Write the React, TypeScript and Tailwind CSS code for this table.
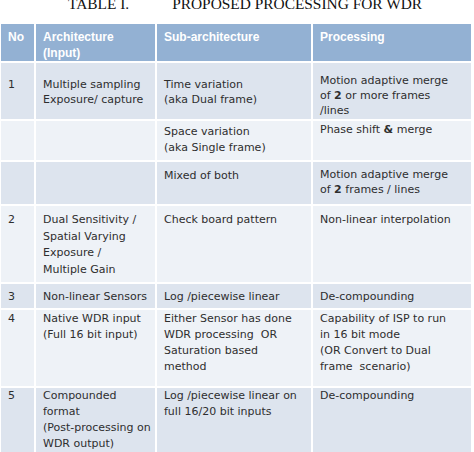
import React from "react";

const body = "font-['DejaVu_Sans',sans-serif] text-[11px] text-[#2e2e2e] whitespace-nowrap";
const dark = "bg-[#dde4ee]";
const light = "bg-[#eef2f7]";

function Cell({ bg, pt, lines, lh = "leading-[15px]" }: { bg: string; pt: string; lines?: React.ReactNode[]; lh?: string }) {
  return (
    <div className={`${bg} ${pt} pl-[7px] ${body} ${lh}`}>
      {(lines || []).map((l, i) => (
        <div key={i}>{l}</div>
      ))}
    </div>
  );
}

function Head({ lines }: { lines: string[] }) {
  return (
    <div className="bg-[#93b1d3] pt-[5px] pl-[7px] font-['Liberation_Sans',Arial,sans-serif] font-bold text-[12px] leading-[16px] text-white whitespace-nowrap">
      {lines.map((l, i) => (
        <div key={i}>{l}</div>
      ))}
    </div>
  );
}

export default function App() {
  return (
    <div className="w-[474px] h-[452px] overflow-hidden bg-white">
      <div className="h-[24px] overflow-hidden">
        <div className="-mt-[4px] pl-[68px] flex font-['Liberation_Serif','Times_New_Roman',serif] text-[15.4px] leading-[15px] text-[#111] whitespace-nowrap">
          <span>TABLE I.</span>
          <span className="ml-[43px]">PROPOSED PROCESSING FOR WDR</span>
        </div>
      </div>
      <div className="ml-[1px] w-[470px] grid grid-cols-[33px_119px_154px_158px] grid-rows-[37px_56px_39px_42px_76px_24px_76px_70px] gap-[2px] bg-white">
        <Head lines={["No"]} />
        <Head lines={["Architecture", "(Input)"]} />
        <Head lines={["Sub-architecture"]} />
        <Head lines={["Processing"]} />

        <Cell bg={dark} pt="pt-[14px]" lines={["1"]} />
        <Cell bg={dark} pt="pt-[14px]" lines={["Multiple sampling", "Exposure/ capture"]} />
        <Cell bg={dark} pt="pt-[14px]" lines={["Time variation", "(aka Dual frame)"]} />
        <Cell
          bg={dark}
          pt="pt-[10px]"
          lines={[
            "Motion adaptive merge",
            <>of <b>2</b> or more frames</>,
            "/lines",
          ]}
        />

        <Cell bg={light} pt="pt-[2px]" />
        <Cell bg={light} pt="pt-[2px]" />
        <Cell bg={light} pt="pt-[3px]" lh="leading-[16px]" lines={["Space variation", "(aka Single frame)"]} />
        <Cell bg={light} pt="pt-[1px]" lines={[<>Phase shift <b>&amp;</b> merge</>]} />

        <Cell bg={dark} pt="pt-[6px]" />
        <Cell bg={dark} pt="pt-[6px]" />
        <Cell bg={dark} pt="pt-[6px]" lines={["Mixed of both"]} />
        <Cell
          bg={dark}
          pt="pt-[5px]"
          lines={["Motion adaptive merge", <>of <b>2</b> frames / lines</>]}
        />

        <Cell bg={light} pt="pt-[6px]" lh="leading-[16.5px]" lines={["2"]} />
        <Cell
          bg={light}
          pt="pt-[6px]"
          lh="leading-[16.5px]"
          lines={["Dual Sensitivity /", "Spatial Varying", "Exposure /", "Multiple Gain"]}
        />
        <Cell bg={light} pt="pt-[6px]" lh="leading-[16.5px]" lines={["Check board pattern"]} />
        <Cell bg={light} pt="pt-[6px]" lh="leading-[16.5px]" lines={["Non-linear interpolation"]} />

        <Cell bg={dark} pt="pt-[5px]" lines={["3"]} />
        <Cell bg={dark} pt="pt-[5px]" lines={["Non-linear Sensors"]} />
        <Cell bg={dark} pt="pt-[5px]" lines={["Log /piecewise linear"]} />
        <Cell bg={dark} pt="pt-[5px]" lines={["De-compounding"]} />

        <Cell bg={light} pt="pt-[1px]" lh="leading-[16px]" lines={["4"]} />
        <Cell
          bg={light}
          pt="pt-[1px]"
          lh="leading-[16px]"
          lines={["Native WDR input", "(Full 16 bit input)"]}
        />
        <Cell
          bg={light}
          pt="pt-[1px]"
          lh="leading-[16px]"
          lines={["Either Sensor has done", "WDR processing\u00a0 OR", "Saturation based", "method"]}
        />
        <Cell
          bg={light}
          pt="pt-[1px]"
          lh="leading-[16px]"
          lines={["Capability of ISP to run", "in 16 bit mode", "(OR Convert to Dual", "frame\u00a0 scenario)"]}
        />

        <Cell bg={dark} pt="pt-[0px]" lh="leading-[16px]" lines={["5"]} />
        <Cell
          bg={dark}
          pt="pt-[0px]"
          lh="leading-[16px]"
          lines={["Compounded", "format", "(Post-processing on", "WDR output)"]}
        />
        <Cell
          bg={dark}
          pt="pt-[0px]"
          lh="leading-[16px]"
          lines={["Log /piecewise linear on", "full 16/20 bit inputs"]}
        />
        <Cell bg={dark} pt="pt-[0px]" lh="leading-[16px]" lines={["De-compounding"]} />
      </div>
    </div>
  );
}
